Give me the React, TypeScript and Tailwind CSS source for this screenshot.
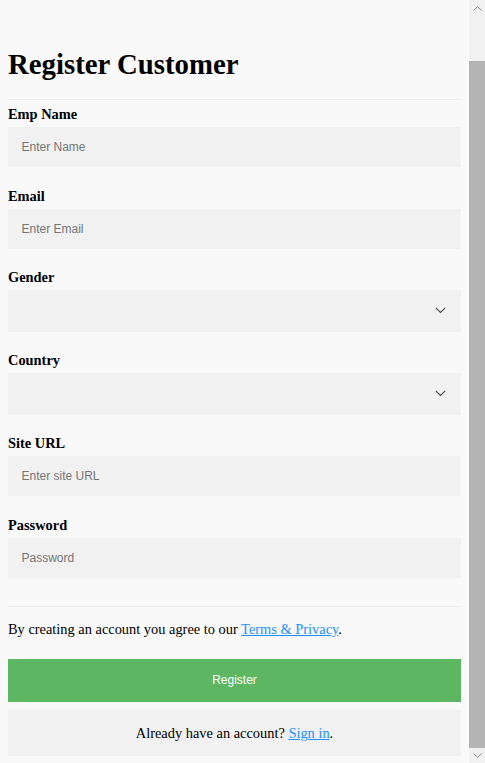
import React from "react";

const serif = "font-['Liberation_Serif','Times_New_Roman',serif]";
const sans = "font-['Liberation_Sans',Arial,sans-serif]";

function Chevron() {
  return (
    <svg width="11" height="7" viewBox="0 0 11 7" fill="none">
      <path d="M0.8 0.8 L5.5 5.5 L10.2 0.8" stroke="#4a4a4a" strokeWidth="1.1" />
    </svg>
  );
}

function Label({ children }: { children: React.ReactNode }) {
  return (
    <div className={`${serif} h-[18px] text-[14.4px] leading-[18px] font-bold text-black`}>
      {children}
    </div>
  );
}

function TextField({ label, placeholder, first, type = "text" }: { label: string; placeholder: string; first?: boolean; type?: string }) {
  return (
    <div className={first ? "mt-[5px]" : "mt-[19.5px]"}>
      <Label>{label}</Label>
      <input
        type={type}
        placeholder={placeholder}
        className={`${sans} mt-[4px] block h-[40px] w-full bg-[#f1f1f1] px-[13.5px] text-[12px] text-black outline-none placeholder:text-[#757575]`}
      />
    </div>
  );
}

function SelectField({ label }: { label: string }) {
  return (
    <div className="mt-[19.5px]">
      <Label>{label}</Label>
      <div className="mt-[4px] flex h-[41.5px] w-full items-center justify-end bg-[#f1f1f1] pr-[15px]">
        <Chevron />
      </div>
    </div>
  );
}

export default function App() {
  return (
    <div className="flex h-[763px] w-[485px] overflow-hidden bg-[#f9f9f9]">
      <div className="flex w-[469px] flex-col px-[8px]">
        <h1 className={`${serif} mt-[48px] text-[28.8px] leading-[33px] font-bold text-black`}>
          Register Customer
        </h1>
        <div className="mt-[18px] h-px w-full bg-[#eeeeee]" />
        <TextField label="Emp Name" placeholder="Enter Name" first />
        <TextField label="Email" placeholder="Enter Email" />
        <SelectField label="Gender" />
        <SelectField label="Country" />
        <TextField label="Site URL" placeholder="Enter site URL" />
        <TextField label="Password" placeholder="Password" type="password" />
        <div className="mt-[28.5px] h-px w-full bg-[#eeeeee]" />
        <p className={`${serif} mt-[13px] text-[14.4px] leading-[18px] text-black`}>
          By creating an account you agree to our{" "}
          <a className="text-[#1e90ff] underline">Terms &amp; Privacy</a>.
        </p>
        <div
          className={`${sans} mt-[21px] flex h-[42.7px] w-full items-center justify-center bg-[#5db661] text-[12px] text-white`}
        >
          Register
        </div>
        <div
          className={`${serif} mt-[8px] flex h-[46px] w-full items-center justify-center bg-[#f1f1f1] pt-[3px] text-[14.4px] text-black`}
        >
          <span>
            Already have an account? <a className="text-[#1e90ff] underline">Sign in</a>.
          </span>
        </div>
      </div>
      <div className="flex w-[16px] flex-col bg-[#f1f1f1]">
        <div className="flex h-[17px] items-center justify-center">
          <svg width="9" height="5" viewBox="0 0 9 5" fill="none">
            <path d="M0.5 4.5 L4.5 0.7 L8.5 4.5" stroke="#8a8a8a" strokeWidth="1" />
          </svg>
        </div>
        <div className="h-[44px]" />
        <div className="h-[687px] bg-[#b4b4b4]" />
        <div className="flex flex-1 items-center justify-center">
          <svg width="9" height="5" viewBox="0 0 9 5" fill="none">
            <path d="M0.5 0.5 L4.5 4.3 L8.5 0.5" stroke="#8a8a8a" strokeWidth="1" />
          </svg>
        </div>
      </div>
    </div>
  );
}
